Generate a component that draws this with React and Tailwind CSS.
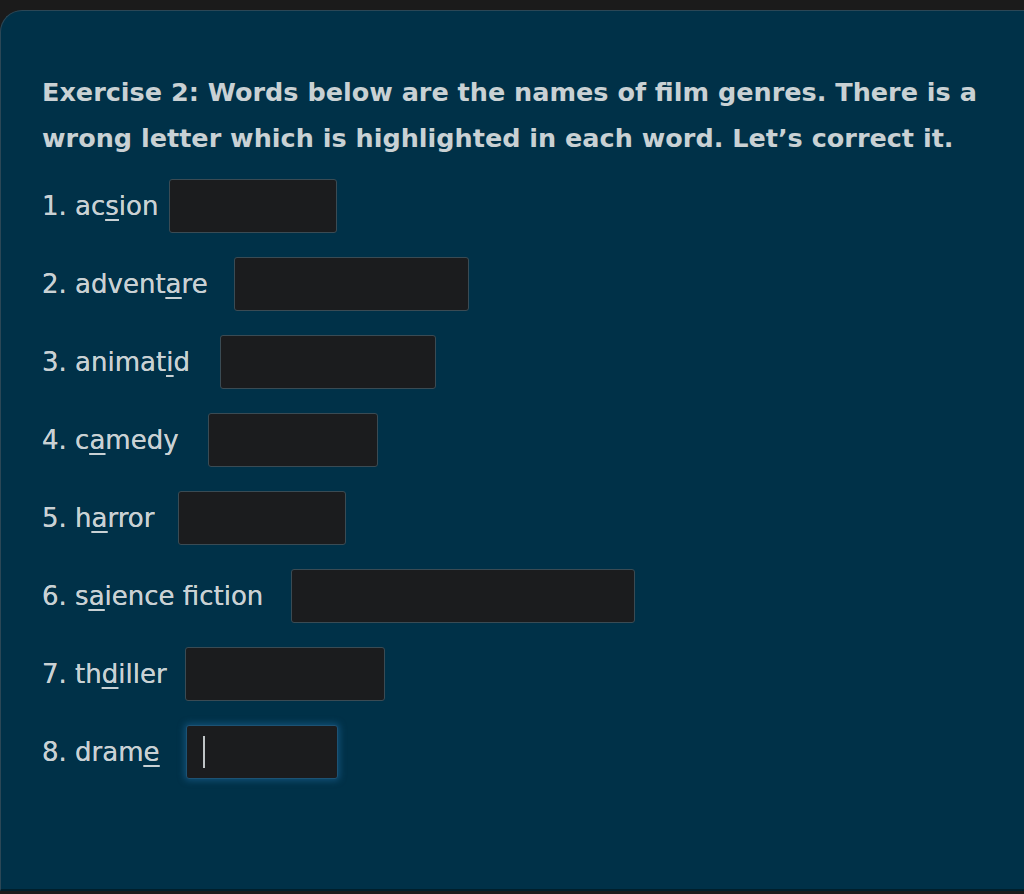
import React from "react";

const items = [
  { n: "1.", pre: "ac", u: "s", post: "ion", lw: 127, w: 168 },
  { n: "2.", pre: "advent", u: "a", post: "re", lw: 192, w: 235 },
  { n: "3.", pre: "animat", u: "i", post: "d", lw: 178, w: 216 },
  { n: "4.", pre: "c", u: "a", post: "medy", lw: 166, w: 170 },
  { n: "5.", pre: "h", u: "a", post: "rror", lw: 136, w: 168 },
  { n: "6.", pre: "s", u: "a", post: "ience fiction", lw: 249, w: 344 },
  { n: "7.", pre: "th", u: "d", post: "iller", lw: 143, w: 200 },
  { n: "8.", pre: "dram", u: "e", post: "", lw: 144, w: 152, focus: true },
];

export default function App() {
  return (
    <div className="w-[1024px] h-[894px] bg-[#1b1b1b] pt-[10px] overflow-hidden" style={{ fontFamily: '"DejaVu Sans", sans-serif' }}>
      <div className="h-[881px] bg-[#003148] rounded-tl-[22px] border-t border-l border-[#2b4756] pl-[41px] pt-[58px] text-[#c9d1d4] border-b-2 border-b-[#001f2c]">
        <p className="text-[25.5px] font-semibold leading-[46px] w-[960px]">
          Exercise 2: Words below are the names of film genres. There is a wrong letter which is highlighted in each word. Let’s correct it.
        </p>
        <div className="mt-[18px] flex flex-col gap-[24px]">
          {items.map((it, i) => (
            <div key={i} className="flex items-center h-[54px]">
              <span className="text-[26px] whitespace-nowrap shrink-0 [text-shadow:0_0_0.4px_#c9d1d4]" style={{ width: it.lw }}>
                {it.n} {it.pre}
                <span className="underline underline-offset-[4px] decoration-[2px]">{it.u}</span>
                {it.post}
              </span>
              <div
                className={
                  it.focus
                    ? "h-[54px] bg-[#1b1c1e] rounded-[3px] border border-[#1d5274] shadow-[0_0_6px_2px_rgba(30,100,150,0.55)] flex items-center pl-[16px] shrink-0"
                    : "h-[54px] bg-[#1b1c1e] rounded-[3px] border border-[#3a4b54] shrink-0"
                }
                style={{ width: it.w }}
              >
                {it.focus && <div className="w-[2px] h-[32px] bg-[#bfc4c6]" />}
              </div>
            </div>
          ))}
        </div>
      </div>
    </div>
  );
}
